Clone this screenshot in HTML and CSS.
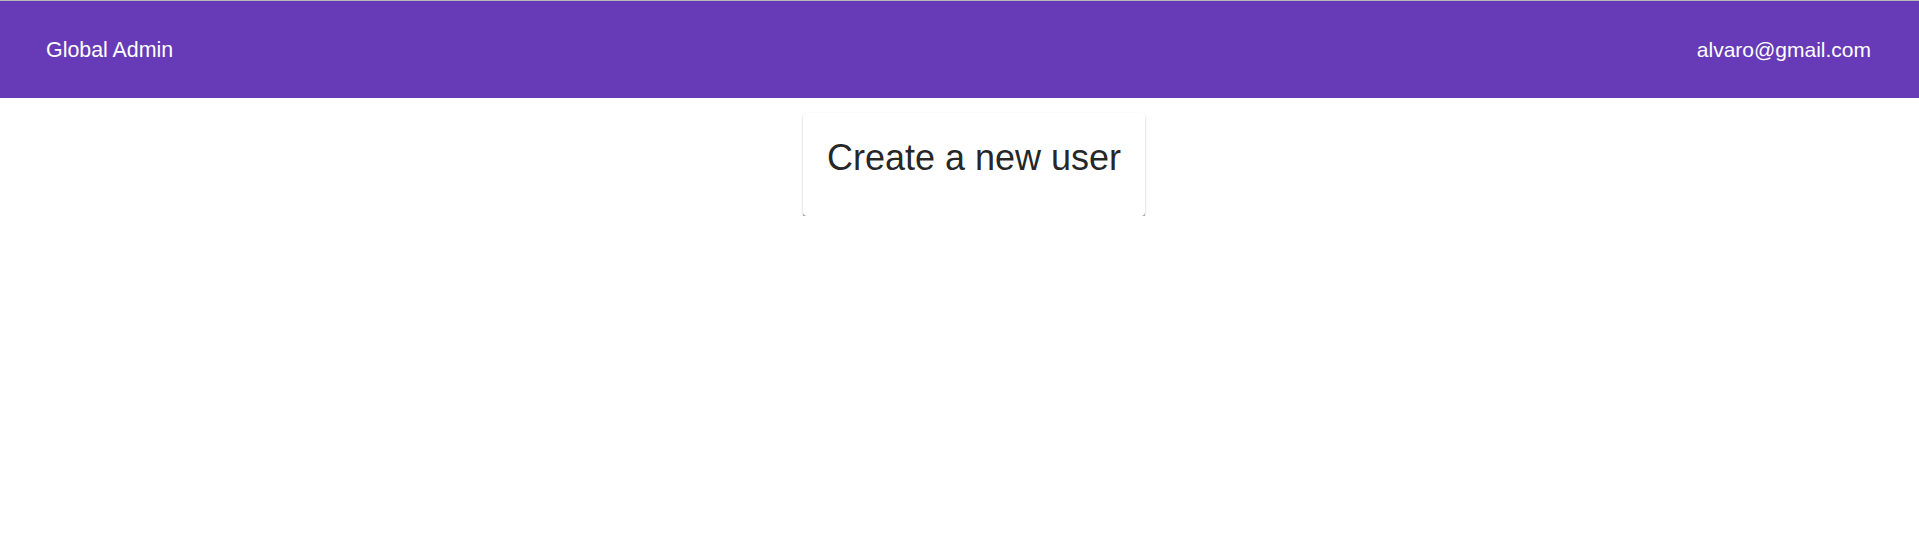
FILE: index.html
```html
<!DOCTYPE html>
<html lang="en">
<head>
<meta charset="utf-8">
<title>Global Admin</title>
<link rel="stylesheet" href="styles.css">
</head>
<body>
<header class="topbar">
  <span class="brand">Global Admin</span>
  <span class="user">alvaro@gmail.com</span>
</header>
<main class="content">
  <div class="card">
    <h2 class="card-title">Create a new user</h2>
  </div>
</main>
</body>
</html>
```
FILE: styles.css
```css
html, body {
  margin: 0;
  padding: 0;
  background: #ffffff;
  font-family: "Liberation Sans", Arial, sans-serif;
}
.topbar {
  border-top: 1px solid #b9b9b9;
  height: 97px;
  background: #673ab7;
  color: #ffffff;
  display: flex;
  align-items: center;
  justify-content: space-between;
  padding: 0 48px 0 46px;
  font-size: 21px;
}
.brand {
  font-size: 21.4px;
  padding-top: 1px;
}
.content {
  display: flex;
  justify-content: center;
  padding: 15px 0 0 29px;
}
.card {
  background: #fff;
  border-radius: 4px;
  box-shadow: 0 2px 1px 0 rgba(0,0,0,.42), 0 1px 3px 0 rgba(0,0,0,.12);
  padding: 24px 24px 37px;
}
.card-title {
  margin: 0;
  font-size: 36px;
  font-weight: 400;
  color: rgba(0,0,0,.87);
}
```
